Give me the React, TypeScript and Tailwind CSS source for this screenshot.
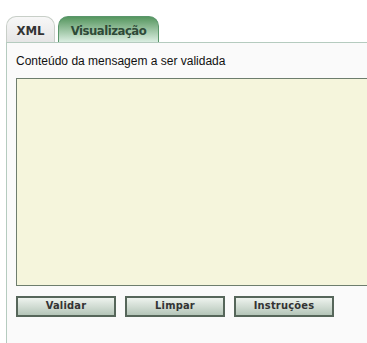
import React, { useState } from 'react';

const App: React.FC = () => {
  const [tab, setTab] = useState<'xml' | 'vis'>('vis');
  const [text, setText] = useState('');

  const btn =
    'w-[100px] h-[21px] border-2 border-[#56665a] bg-gradient-to-b from-[#eef3ee] to-[#b5c6b9] text-[11px] font-bold text-[#333] tracking-[0.2px] font-["DejaVu_Sans_Condensed","DejaVu_Sans",sans-serif]';

  return (
    <div className="h-[343px] w-[367px] overflow-hidden bg-white font-['Liberation_Sans',Arial,sans-serif]">
      <div className="flex items-end gap-[3px] pl-[6px] pt-[16px]">
        <button
          onClick={() => setTab('xml')}
          className="h-[26px] w-[49px] rounded-t-[10px] border border-b-0 border-[#c8cfc8] bg-gradient-to-b from-[#f7f7f7] to-[#e6e6e6] pt-[2px] text-[13px] font-bold text-[#333] font-['DejaVu_Sans_Condensed','DejaVu_Sans',sans-serif]"
        >
          XML
        </button>
        <button
          onClick={() => setTab('vis')}
          className="h-[26px] w-[101px] rounded-t-[10px] border border-b-0 border-[#5a966b] bg-gradient-to-b from-[#55965f] to-[#dbeee2] pt-[2px] text-[13px] font-bold tracking-[-0.5px] text-[#2f4a38] font-['DejaVu_Sans_Condensed','DejaVu_Sans',sans-serif]"
        >
          Visualização
        </button>
      </div>
      <div className="h-[301px] border-t border-l border-[#b5cbbf] bg-[#fafafa] ml-[6px] pl-[9px] pt-[10px]">
        <p className="text-[12px] leading-[16px] text-[#111]">Conteúdo da mensagem a ser validada</p>
        <textarea
          value={text}
          onChange={e => setText(e.target.value)}
          className="mt-[9px] block h-[208px] w-[360px] resize-none border border-[#6d7d6d] bg-[#f5f5dc] outline-none"
        />
        <div className="mt-[10px] flex gap-[9px]">
          <button className={btn}>Validar</button>
          <button className={btn}>Limpar</button>
          <button className={btn}>Instruções</button>
        </div>
      </div>
    </div>
  );
};

export default App;
